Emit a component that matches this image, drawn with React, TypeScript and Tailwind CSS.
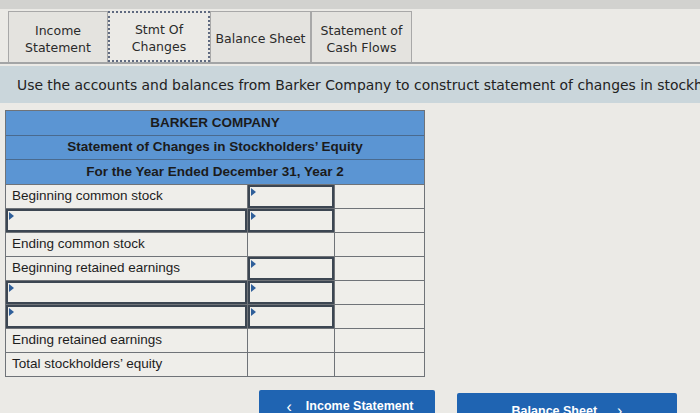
import React from 'react';

const tabs = [
  { label: ['Income', 'Statement'], w: 'w-[100px]' },
  { label: ['Stmt Of', 'Changes'], w: 'w-[102px]', active: true },
  { label: ['Balance Sheet'], w: 'w-[101px]' },
  { label: ['Statement of', 'Cash Flows'], w: 'w-[101px]' },
];

type Row = { label: string; labelInput?: boolean; c2Input?: boolean };

const rows: Row[] = [
  { label: 'Beginning common stock', c2Input: true },
  { label: '', labelInput: true, c2Input: true },
  { label: 'Ending common stock' },
  { label: 'Beginning retained earnings', c2Input: true },
  { label: '', labelInput: true, c2Input: true },
  { label: '', labelInput: true, c2Input: true },
  { label: 'Ending retained earnings' },
  { label: 'Total stockholders\u2019 equity' },
];

function Marker() {
  return (
    <span className="absolute left-[1px] top-[1px] h-0 w-0 border-y-[4px] border-l-[5px] border-y-transparent border-l-[#2f5f9a]" />
  );
}

function Cell({ input, w, children }: { input?: boolean; w: string; children?: React.ReactNode }) {
  return (
    <div className={`relative ${w} h-full shrink-0 border-r border-[#6f7378]`}>
      {input ? (
        <div className="absolute inset-0 border-2 border-[#3c4652]">
          <Marker />
        </div>
      ) : null}
      <div className="flex h-full items-center pl-[6px] text-[13.5px] text-[#1d1d1d]">{children}</div>
    </div>
  );
}

export default function App() {
  return (
    <div className="h-[413px] w-[700px] overflow-hidden bg-[#ebeae6]" style={{ fontFamily: '"DejaVu Sans", Verdana, sans-serif' }}>
      {/* top strip */}
      <div className="h-[9px] bg-[#d2d2cf]" />

      {/* tabs */}
      <div className="flex h-[55px] items-end border-b-2 border-[#a3a5a6] pl-[8px] pt-[4px]">
        {tabs.map((t) => (
          <div
            key={t.label.join()}
            className={`${t.w} flex h-[51px] flex-col items-center justify-center bg-[#e4e3df] pt-[3px] text-[12.5px] leading-[17px] text-[#2a2a2a] ${
              t.active ? 'border-2 border-dotted border-[#5f6a80] bg-[#ebeae6]' : 'border border-b-0 border-[#a8a8a8]'
            }`}
          >
            {t.label.map((l) => (
              <span key={l}>{l}</span>
            ))}
          </div>
        ))}
      </div>

      {/* instructions */}
      <div className="mt-[2px] flex h-[37px] items-center overflow-hidden whitespace-nowrap bg-[#cad6db] pl-[17px] pt-[2px] text-[13.9px] text-[#222]">
        Use the accounts and balances from Barker Company to construct statement of changes in stockh
      </div>

      {/* statement table */}
      <div className="ml-[5px] mt-[7px] w-[420px] border border-[#6f7378]" style={{ fontFamily: '"Liberation Sans", Arial, sans-serif' }}>
        <div className="flex h-[25px] items-center justify-center border-b border-[#4a6a8e] bg-[#5b95d3] text-[13.5px] font-bold text-[#1b1b1b]">
          BARKER COMPANY
        </div>
        <div className="flex h-[24px] items-center justify-center border-b border-[#4a6a8e] bg-[#5b95d3] text-[13.5px] font-bold text-[#1b1b1b]">
          Statement of Changes in Stockholders&rsquo; Equity
        </div>
        <div className="flex h-[24px] items-center justify-center bg-[#5b95d3] text-[13.5px] font-bold text-[#1b1b1b]">
          For the Year Ended December 31, Year 2
        </div>
        {rows.map((r, i) => (
          <div key={i} className="flex h-[24px] border-t border-[#6f7378] bg-[#efeeea]">
            <Cell w="w-[242px]" input={r.labelInput}>
              {r.label}
            </Cell>
            <Cell w="w-[87px]" input={r.c2Input} />
            <div className="h-full flex-1" />
          </div>
        ))}
      </div>

      {/* navigation */}
      <div className="mt-[13px] flex gap-[22px] pl-[259px]" style={{ fontFamily: '"Liberation Sans", Arial, sans-serif' }}>
        <div className="flex h-[28px] w-[176px] items-center justify-center gap-[14px] rounded-t-[2px] bg-[#1f64b2] pl-[6px] pt-[5px] text-[12.5px] font-bold text-white">
          <span className="text-[16px] font-normal">&lsaquo;</span>
          <span>Income Statement</span>
        </div>
        <div className="mt-[3px] flex h-[28px] w-[220px] items-center justify-center gap-[20px] rounded-t-[2px] bg-[#1f64b2] pt-[8px] text-[12.5px] font-bold text-white">
          <span>Balance Sheet</span>
          <span className="text-[16px] font-normal">&rsaquo;</span>
        </div>
      </div>
    </div>
  );
}
